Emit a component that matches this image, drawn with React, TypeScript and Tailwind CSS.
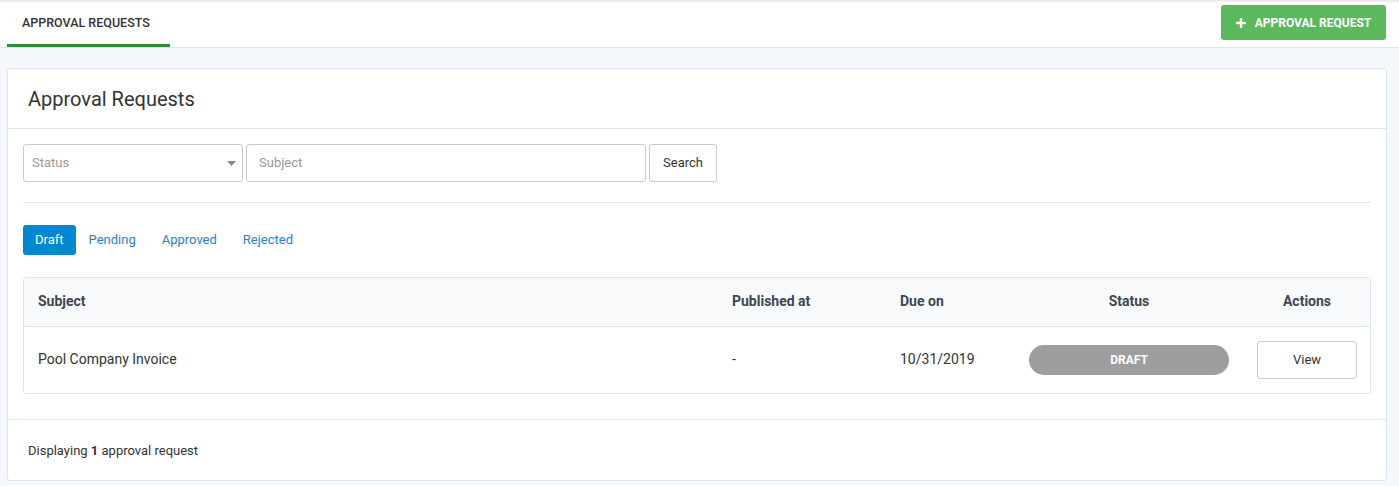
import React from "react";

const tabs = ["Draft", "Pending", "Approved", "Rejected"];

export default function App() {
  return (
    <div className="min-h-screen bg-[#f5f8fc] font-['Roboto',sans-serif] text-[#333]">
      {/* top nav */}
      <div className="relative flex h-[48px] items-stretch justify-between border-b border-[#dfe4ea] bg-white pl-[7px] pr-[13px] shadow-[inset_0_3px_3px_-2px_rgba(0,0,0,0.15)]">
        <div className="flex w-[163px] items-center border-b-[3px] border-[#2e8b36] pl-[15px] pt-[3px] text-[12.5px] font-medium uppercase text-[#333]">
          Approval Requests
        </div>
        <div className="flex items-start pt-[5px]">
          <button className="flex h-[35px] w-[165px] items-center justify-center gap-[9px] rounded-[3px] bg-[#5cb85c] text-[12px] font-bold uppercase text-white">
            <svg width="10" height="10" viewBox="0 0 10 10" fill="white">
              <rect x="3.8" y="0" width="2.4" height="10" />
              <rect x="0" y="3.8" width="10" height="2.4" />
            </svg>
            Approval Request
          </button>
        </div>
      </div>

      <div className="pl-[7px] pr-[12px] pt-[20px] pb-[5px]">
        <div className="rounded-[3px] border border-[#dde5ee] bg-white">
          <div className="flex h-[60px] items-center border-b border-[#dde5ee] px-[20px]">
            <h1 className="text-[20px] font-normal text-[#333]">Approval Requests</h1>
          </div>

          <div className="px-[15px] pt-[15px]">
            {/* filters */}
            <div className="flex gap-[3px]">
              <div className="flex h-[38px] w-[220px] items-center justify-between rounded-[3px] border border-[#ccc] pl-[8px] pr-[6px] text-[13px] text-[#999]">
                <span>Status</span>
                <svg width="9" height="5" viewBox="0 0 9 5" fill="#888">
                  <path d="M0 0h9L4.5 5z" />
                </svg>
              </div>
              <div className="flex h-[38px] w-[400px] items-center rounded-[3px] border border-[#ccc] px-[12px] text-[13px] text-[#999]">
                Subject
              </div>
              <button className="h-[38px] w-[68px] rounded-[3px] border border-[#ccc] bg-white text-[13px] text-[#333]">
                Search
              </button>
            </div>

            <div className="mt-[20px] border-t border-[#dfe3e8]" />

            {/* status pills */}
            <div className="mt-[22px] flex items-center">
              {tabs.map((t, i) => (
                <div
                  key={t}
                  className={
                    i === 0
                      ? "flex h-[30px] items-center rounded-[3px] bg-[#0288d1] px-[12px] text-[13px] text-white"
                      : "flex h-[30px] items-center px-[13px] text-[13px] text-[#2a7fc9]"
                  }
                >
                  {t}
                </div>
              ))}
            </div>

            {/* table */}
            <div className="mt-[22px] overflow-hidden rounded-[3px] border border-[#dde5ee]">
              <table className="w-full table-fixed border-collapse text-[14px]">
                <colgroup>
                  <col className="w-[694px]" />
                  <col className="w-[168px]" />
                  <col className="w-[128px]" />
                  <col className="w-[230px]" />
                  <col />
                </colgroup>
                <thead>
                  <tr className="h-[48px] border-b border-[#dde5ee] bg-[#f8fafc] text-left font-bold text-[#3d4653]">
                    <th className="px-[14px]">Subject</th>
                    <th className="px-[14px]">Published at</th>
                    <th className="px-[14px]">Due on</th>
                    <th className="px-[15px] text-center">Status</th>
                    <th className="px-[15px] text-center">Actions</th>
                  </tr>
                </thead>
                <tbody>
                  <tr className="h-[67px] text-[#333]">
                    <td className="px-[14px]">Pool Company Invoice</td>
                    <td className="px-[14px]">-</td>
                    <td className="px-[14px]">10/31/2019</td>
                    <td className="px-[15px]">
                      <div className="flex h-[30px] items-center justify-center rounded-full bg-[#9e9e9e] pt-[1px] text-[12px] font-bold text-white">
                        DRAFT
                      </div>
                    </td>
                    <td className="px-[13px]">
                      <button className="mx-auto flex h-[38px] w-[100px] items-center justify-center rounded-[3px] border border-[#ccc] bg-white text-[13px] text-[#333]">
                        View
                      </button>
                    </td>
                  </tr>
                </tbody>
              </table>
            </div>
          </div>

          <div className="mt-[25px] flex h-[61px] items-center border-t border-[#dde5ee] px-[20px] pt-[1px] text-[13px] text-[#333]">
            <span>
              Displaying <b>1</b> approval request
            </span>
          </div>
        </div>
      </div>
    </div>
  );
}
